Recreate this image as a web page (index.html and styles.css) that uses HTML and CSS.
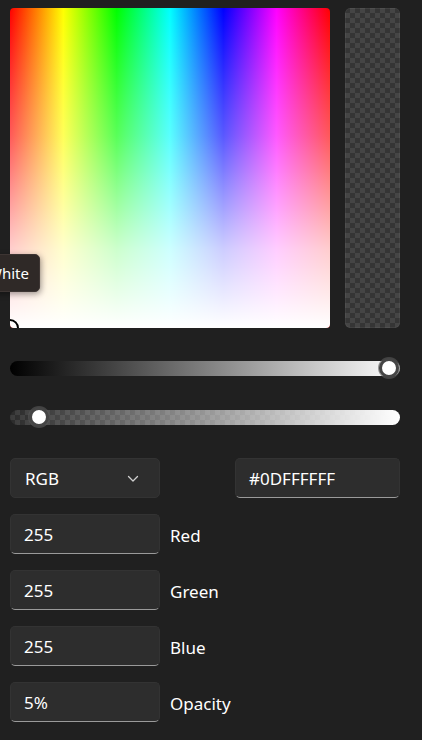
FILE: index.html
```html
<!DOCTYPE html>
<html lang="en">
<head>
<meta charset="utf-8">
<title>Color picker</title>
<link rel="stylesheet" href="styles.css">
</head>
<body>
<div class="picker">
  <div class="top">
    <div class="spectrum">
      <div class="spectrum-sat"></div>
      <div class="spectrum-ring"></div>
    </div>
    <div class="preview checker"><div class="preview-fill"></div></div>
  </div>

  <div class="slider">
    <div class="track track-value"></div>
    <div class="thumb" style="left: 369px"></div>
  </div>
  <div class="slider slider-alpha">
    <div class="track checker"><div class="track-alpha"></div></div>
    <div class="thumb" style="left: 19px"></div>
  </div>

  <div class="mode-row">
    <div class="combo">
      <span>RGB</span>
      <svg class="chevron" width="12" height="8" viewBox="0 0 12 8"><polyline points="1.5,1.5 6,6 10.5,1.5" fill="none" stroke="#d0d0d0" stroke-width="1.3" stroke-linecap="round" stroke-linejoin="round"/></svg>
    </div>
    <div class="field field-hex">#0DFFFFFF</div>
  </div>

  <div class="channel"><div class="field">255</div><span class="label">Red</span></div>
  <div class="channel"><div class="field">255</div><span class="label">Green</span></div>
  <div class="channel"><div class="field">255</div><span class="label">Blue</span></div>
  <div class="channel"><div class="field">5%</div><span class="label">Opacity</span></div>
</div>

<div class="tooltip">White</div>
</body>
</html>
```

FILE: styles.css
```css
html, body {
  margin: 0;
  background: #202020;
  color: #ffffff;
  font-family: "Segoe UI", "Noto Sans", "Open Sans", sans-serif;
  font-size: 17px;
  overflow: hidden;
}

.picker {
  width: 390px;
  padding: 8px 22px 0 10px;
}

.top {
  display: flex;
  gap: 15px;
}

.spectrum {
  position: relative;
  width: 320px;
  height: 320px;
  border-radius: 4px;
  overflow: hidden;
  background: linear-gradient(to right,
    #ff0000 0%, #ffff00 16.667%, #00ff00 33.333%, #00ffff 50%,
    #0000ff 66.667%, #ff00ff 83.333%, #ff0000 100%);
}

.spectrum-sat {
  position: absolute;
  inset: 0;
  background: linear-gradient(to bottom, rgba(255,255,255,0) 0%, rgba(255,255,255,0.35) 40%, rgba(255,255,255,0.8) 75%, #ffffff 100%);
}

.spectrum-ring {
  position: absolute;
  left: -9px;
  bottom: -9px;
  width: 14px;
  height: 14px;
  border: 2px solid #000;
  border-radius: 50%;
  box-shadow: inset 0 0 0 1px #fff;
}

.checker {
  background-color: #2b2b2b;
  background-image:
    linear-gradient(45deg, #3b3b3b 25%, transparent 25%, transparent 75%, #3b3b3b 75%),
    linear-gradient(45deg, #3b3b3b 25%, transparent 25%, transparent 75%, #3b3b3b 75%);
  background-size: 10px 10px;
  background-position: 0 0, 5px 5px;
}

.preview {
  position: relative;
  width: 55px;
  height: 320px;
  border-radius: 5px;
  overflow: hidden;
}

.preview-fill {
  position: absolute;
  inset: 0;
  background: rgba(255,255,255,0.05);
  border-radius: 5px;
  box-shadow: inset 0 0 0 1px rgba(255,255,255,0.06);
}

.slider {
  position: relative;
  height: 20px;
  margin-top: 30px;
  display: flex;
  align-items: center;
}

.slider-alpha {
  margin-top: 29px;
}

.track {
  position: relative;
  width: 390px;
  height: 15px;
  border-radius: 8px;
  overflow: hidden;
}

.track-value {
  background: linear-gradient(to right, #000000, #ffffff);
}

.track-alpha {
  position: absolute;
  inset: 0;
  background: linear-gradient(to right, rgba(255,255,255,0) 0%, rgba(255,255,255,0.5) 50%, #ffffff 100%);
}

.thumb {
  position: absolute;
  top: 0;
  width: 20px;
  height: 20px;
  border-radius: 50%;
  background: #ffffff;
  box-sizing: border-box;
  border: 3px solid #454545;
  box-shadow: 0 0 0 1px rgba(90,90,90,0.6);
}

.mode-row {
  display: flex;
  justify-content: space-between;
  margin-top: 31px;
}

.combo, .field {
  box-sizing: border-box;
  height: 40px;
  background: #2d2d2d;
  border: 1px solid #333333;
  border-radius: 5px;
  display: flex;
  align-items: center;
}

.combo {
  width: 150px;
  padding: 0 20px 0 14px;
  justify-content: space-between;
}

.chevron {
  display: block;
  margin-top: 1px;
}

.field {
  width: 150px;
  padding-left: 13px;
  border-bottom: 1px solid #9a9a9a;
}

.field-hex {
  width: 165px;
}

.channel {
  display: flex;
  align-items: center;
  margin-top: 16px;
}

.label {
  margin-left: 10px;
  padding-top: 3px;
}

.tooltip {
  position: absolute;
  left: 40px;
  top: 254px;
  transform: translateX(-100%);
  box-sizing: border-box;
  height: 38px;
  padding: 0 10px 0 10px;
  display: flex;
  align-items: center;
  font-size: 15px;
  background: #2f2927;
  border: 1px solid #3d3533;
  border-radius: 5px;
  box-shadow: 0 2px 6px rgba(0,0,0,0.4);
  white-space: nowrap;
}
```
